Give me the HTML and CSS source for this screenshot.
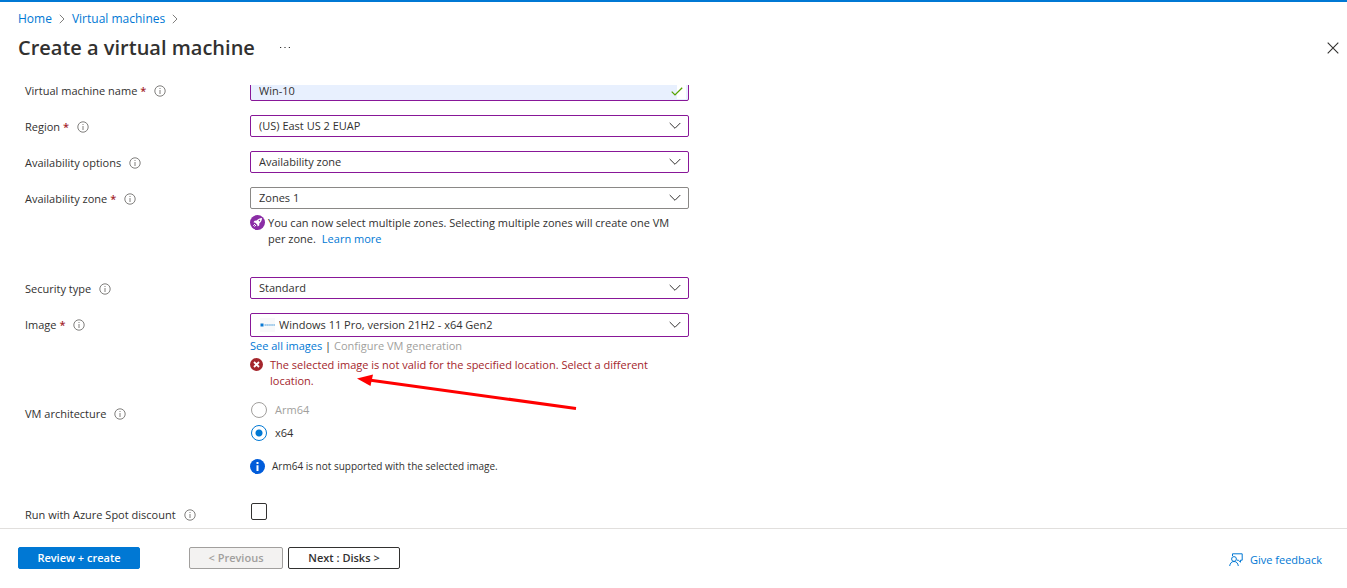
FILE: index.html
```html
<!DOCTYPE html>
<html lang="en">
<head>
<meta charset="utf-8">
<title>Create a virtual machine</title>
<link rel="stylesheet" href="styles.css">
</head>
<body>
<svg class="defs" aria-hidden="true">
  <symbol id="info" viewBox="0 0 12 12"><circle cx="6" cy="6" r="5.2" fill="none" stroke="currentColor" stroke-width=".8"/><path d="M6 5v4M6 3v1" stroke="currentColor" stroke-width=".8" fill="none"/></symbol>
  <symbol id="down" viewBox="0 0 12 8"><path d="M.7 1 6 6.3 11.3 1" fill="none" stroke="currentColor"/></symbol>
  <symbol id="right" viewBox="0 0 6 10"><path d="M.8.8 5 5 .8 9.2" fill="none" stroke="currentColor" stroke-width=".8"/></symbol>
</svg>
<header class="header">
  <nav class="crumbs" aria-label="Breadcrumb">
    <a href="#">Home</a><svg class="crumb-sep"><use href="#right"/></svg>
    <a href="#">Virtual machines</a><svg class="crumb-sep"><use href="#right"/></svg>
  </nav>
  <div class="title-row">
    <h1 class="title">Create a virtual machine</h1>
    <button class="icon-button" type="button" aria-label="More"><svg class="more" viewBox="0 0 12 4"><path d="M1 1.5h1.2M5.4 1.5h1.2M9.8 1.5H11" stroke="currentColor" stroke-width="1.2"/></svg></button>
    <button class="icon-button close" type="button" aria-label="Close"><svg class="close-icon" viewBox="0 0 12 12"><path d="M.7.7l10.6 10.6M11.3.7.7 11.3" stroke="currentColor" stroke-width="1.1"/></svg></button>
  </div>
</header>
<main class="pane">
  <form class="form">
    <div class="row">
      <div class="label"><label for="name">Virtual machine name <span class="req">*</span></label><svg class="info"><use href="#info"/></svg></div>
      <div class="control field"><input class="input" id="name" type="text" value="Win-10"><span class="valid"><svg class="check" viewBox="0 0 12 9"><path d="M.7 4.6 4 7.9 11.2.8" fill="none" stroke="currentColor" stroke-width="1.3"/></svg></span></div>
    </div>
    <div class="row">
      <div class="label"><label for="region">Region <span class="req">*</span></label><svg class="info"><use href="#info"/></svg></div>
      <div class="control field"><select class="select" id="region"><option>(US) East US 2 EUAP</option></select><svg class="chevron"><use href="#down"/></svg></div>
    </div>
    <div class="row">
      <div class="label"><label for="options">Availability options</label><svg class="info"><use href="#info"/></svg></div>
      <div class="control field"><select class="select" id="options"><option>Availability zone</option></select><svg class="chevron"><use href="#down"/></svg></div>
    </div>
    <div class="row row-noted">
      <div class="label"><label for="zone">Availability zone <span class="req">*</span></label><svg class="info"><use href="#info"/></svg></div>
      <div class="control">
        <div class="field"><select class="select neutral" id="zone"><option>Zones 1</option></select><svg class="chevron"><use href="#down"/></svg></div>
        <div class="note">
          <svg class="note-icon" viewBox="0 0 15 15"><circle cx="7.5" cy="7.5" r="7.5" fill="#8a2da5"/><path d="M12 3c-2.300 0-4 .9-5.300 2.600L4.600 5.800 3.400 7.300l1.900.4 2 2 .4 1.900 1.500-1.200.2-2.100C11.100 7 12 5.300 12 3z" fill="#fff"/><path d="M5 9 3.300 10.800M6 10l-1.500 1.600" stroke="#fff" stroke-width="1"/><circle cx="9.400" cy="5.600" r=".8" fill="#8a2da5"/></svg>
          <p class="text">You can now select multiple zones. Selecting multiple zones will create one VM per zone.<a class="more-link" href="#">Learn more</a></p>
        </div>
      </div>
    </div>
    <div class="row">
      <div class="label"><label for="security">Security type</label><svg class="info"><use href="#info"/></svg></div>
      <div class="control field"><select class="select" id="security"><option>Standard</option></select><svg class="chevron"><use href="#down"/></svg></div>
    </div>
    <div class="row row-image">
      <div class="label"><label for="image">Image <span class="req">*</span></label><svg class="info"><use href="#info"/></svg></div>
      <div class="control">
        <div class="field"><select class="select with-logo" id="image"><option>Windows 11 Pro, version 21H2 - x64 Gen2</option></select>
          <svg class="logo" viewBox="0 0 15 14"><path d="M0 0h15v14H0z" fill="#f8f9fa"/><path d="M.5 5.500h3v3h-3z" fill="#0878d4"/><path d="M4.500 7H15" stroke="#4d9fdc" stroke-width="1.200" stroke-dasharray="1.600 .3"/></svg>
          <svg class="chevron"><use href="#down"/></svg></div>
        <p class="text links"><a href="#">See all images</a> | <span class="disabled">Configure VM generation</span></p>
        <div class="error" role="alert">
          <svg class="error-icon" viewBox="0 0 13 13"><circle cx="6.500" cy="6.500" r="6.500" fill="#a4262c"/><path d="m4 4 5 5M9 4 4 9" stroke="#fff" stroke-width="1.800"/></svg>
          <p class="text">The selected image is not valid for the specified location. Select a different location.</p>
          <svg class="arrow" viewBox="0 0 222 40" aria-hidden="true"><path d="M12 8 219 36.500" stroke="#f00" stroke-width="3"/><path d="M0 6.500 16 2.500 13.500 14z" fill="#f00"/></svg>
        </div>
      </div>
    </div>
    <div class="row row-arch">
      <div class="label"><span id="arch">VM architecture</span><svg class="info"><use href="#info"/></svg></div>
      <div class="control">
        <div class="radios" role="radiogroup" aria-labelledby="arch">
          <label class="choice disabled"><input class="radio" type="radio" name="arch" disabled>Arm64</label>
          <label class="choice"><input class="radio" type="radio" name="arch" checked>x64</label>
        </div>
        <div class="notice">
          <svg class="note-icon" viewBox="0 0 15 15"><circle cx="7.500" cy="7.500" r="7.500" fill="#015cda"/><path d="M7.500 6.300V12M7.500 3v2" stroke="#fff" stroke-width="2"/></svg>
          <p class="small">Arm64 is not supported with the selected image.</p>
        </div>
      </div>
    </div>
    <div class="row">
      <div class="label"><label for="spot">Run with Azure Spot discount</label><svg class="info"><use href="#info"/></svg></div>
      <div class="control"><input class="checkbox" id="spot" type="checkbox"></div>
    </div>
  </form>
</main>
<footer class="footer">
  <button class="button primary" type="button">Review + create</button>
  <div class="pager">
    <button class="button previous" type="button" disabled>&lt; Previous</button>
    <button class="button next" type="button">Next : Disks &gt;</button>
  </div>
  <a class="feedback" href="#"><svg class="feedback-icon" viewBox="0 0 14 14"><path d="M3.500 3V.8h9.700v6.400h-1.700v2L9.300 7.200H8" fill="none" stroke="currentColor"/><circle cx="5" cy="6" r="2.400" fill="none" stroke="currentColor"/><path d="M.7 13c.3-2.800 2-4.500 4.300-4.500S9 10.200 9.300 13" fill="none" stroke="currentColor"/></svg>Give feedback</a>
</footer>
</body>
</html>
```
FILE: styles.css
```css
* { box-sizing: border-box; }
body {
  margin: 0;
  height: 100vh;
  display: flex;
  flex-direction: column;
  border-top: 2px solid #0078d4;
  background: #fff;
  color: #323130;
  font: 11px/16px "Segoe UI", "Open Sans", "Noto Sans", sans-serif;
}
a { color: #0078d4; text-decoration: none; }
p { margin: 0; }
svg { display: block; flex: none; }
.defs { position: absolute; width: 0; height: 0; }

.header { flex: none; height: 83px; padding: 9px 8px 0 18px; }
.crumbs { display: flex; align-items: center; font-size: 12px; }
.crumb-sep { width: 6px; height: 10px; margin: 0 7px; color: #605e5c; }
.title-row { display: flex; align-items: center; margin-top: 7px; }
.title { margin: 0; font-size: 20px; line-height: 28px; font-weight: 600; }
.icon-button { display: flex; padding: 0; border: 0; background: none; color: #323130; }
.more { width: 12px; height: 4px; margin-left: 24px; }
.close { margin: 0 0 0 auto; }
.close-icon { width: 12px; height: 12px; }

.pane { flex: 1; min-height: 0; overflow: hidden; }
.form { margin-top: -6px; padding: 0 25px; }
.row { display: grid; grid-template-columns: 225px minmax(0, 439px); margin-bottom: 14px; }
.row-noted { margin-bottom: 30px; }
.row-image { margin-bottom: 13px; }
.row-arch { margin-bottom: 29px; }
.label { display: flex; align-items: center; gap: 8px; height: 22px; padding-top: 2px; }
.req { color: #a4262c; font-weight: 600; }
.info { width: 12px; height: 12px; color: #605e5c; }

.field { position: relative; display: flex; }
.input, .select {
  width: 100%;
  height: 22px;
  margin: 0;
  padding: 0 8px;
  border: 1px solid #881798;
  border-radius: 2px;
  background: #fff;
  color: #323130;
  font: inherit;
  appearance: none;
}
.input { background: #e8f0fe; }
.neutral { border-color: #8a8886; }
.select.with-logo { height: 24px; padding-left: 28px; }
.chevron { position: absolute; right: 8px; top: 50%; width: 12px; height: 8px; margin-top: -4px; pointer-events: none; }
.valid { position: absolute; right: 3px; bottom: 2px; width: 9px; height: 18px; background: #fff; }
.check { position: absolute; right: 3px; top: 6px; width: 12px; height: 9px; color: #57a300; }
.logo { position: absolute; left: 10px; top: 5px; width: 15px; height: 14px; pointer-events: none; }

.note { display: flex; gap: 3px; margin-top: 6px; }
.note-icon { width: 15px; height: 15px; }
.more-link { margin-left: 6px; }
.links { margin-top: 1px; }
.disabled { color: #a19f9d; }
.error { position: relative; display: flex; gap: 7px; margin-top: 3px; padding-right: 20px; color: #a4262c; }
.error-icon { width: 13px; height: 13px; margin-top: 1px; }
.arrow { position: absolute; left: 107px; top: 15px; width: 222px; height: 40px; pointer-events: none; }

.radios { display: grid; gap: 7px; }
.choice { display: flex; align-items: center; gap: 8px; }
.radio {
  width: 16px;
  height: 16px;
  margin: 0 0 0 1px;
  border: 1px solid #323130;
  border-radius: 50%;
  appearance: none;
}
.radio:disabled { border-color: #a19f9d; }
.radio:checked { border-color: #0078d4; background: radial-gradient(circle, #0078d4 3px, transparent 4px); }
.notice { display: flex; align-items: center; gap: 7px; margin-top: 17px; }
.small { font-size: 10px; }
.checkbox {
  display: block;
  width: 16px;
  height: 17px;
  margin: 0 0 0 1px;
  border: 1px solid #323130;
  border-radius: 2px;
  appearance: none;
}

.footer { flex: none; display: flex; align-items: center; height: 60px; padding: 0 25px 2px 18px; border-top: 1px solid #e1dfdd; background: #fff; }
.button { height: 22px; padding: 0; border: 1px solid #323130; border-radius: 2px; background: #fff; color: #323130; font: inherit; font-weight: 600; }
.primary { width: 122px; border-color: #0078d4; background: #0078d4; color: #fff; }
.pager { display: flex; gap: 5px; margin-left: 49px; }
.previous { width: 94px; border-color: #a19f9d; background: #f3f2f1; color: #a19f9d; }
.next { width: 112px; }
.feedback { display: flex; align-items: center; gap: 7px; margin-left: auto; padding-top: 4px; }
.feedback-icon { width: 14px; height: 14px; }
```
